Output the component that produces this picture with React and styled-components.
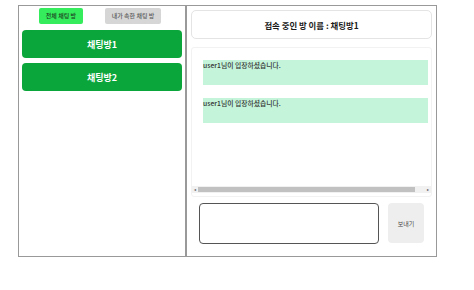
import React from 'react'
import styled, { createGlobalStyle } from 'styled-components'

const GlobalStyle = createGlobalStyle`
  * { box-sizing: border-box; }
  body {
    margin: 0;
    background: #ffffff;
    font-family: "Noto Sans", "Noto Sans CJK KR", sans-serif;
  }
`

const rooms = ['채팅방1', '채팅방2']
const messages = ['user1님이 입장하셨습니다.', 'user1님이 입장하셨습니다.']

const App = () => {
    return (
        <>
            <GlobalStyle />
            <Page>
                <Layout>
                    <RoomPanel>
                        <TabRow>
                            <Tab active $width={44}>전체 채팅 방</Tab>
                            <Tab $width={56}>내가 속한 채팅 방</Tab>
                        </TabRow>
                        <RoomList>
                            {rooms.map((r) => (
                                <RoomButton key={r}>{r}</RoomButton>
                            ))}
                        </RoomList>
                    </RoomPanel>

                    <ChatPanel>
                        <ChatHeader>접속 중인 방 이름 : 채팅방1</ChatHeader>
                        <MessageBox>
                            <MessageList>
                                {messages.map((m, i) => (
                                    <Message key={i}>{m}</Message>
                                ))}
                            </MessageList>
                            <ScrollBar>
                                <Arrow>◂</Arrow>
                                <Thumb />
                                <Arrow>▸</Arrow>
                            </ScrollBar>
                        </MessageBox>
                        <InputRow>
                            <MessageInput />
                            <SendButton>보내기</SendButton>
                        </InputRow>
                    </ChatPanel>
                </Layout>
            </Page>
        </>
    )
}

export default App


const Page = styled.div`
  padding: 5px 0 0 18px;
`

const Layout = styled.div`
  display: flex;
  width: 420px;
  height: 252px;
`

const RoomPanel = styled.section`
  width: 40%;
  border: 1px solid #999999;
  display: flex;
  flex-direction: column;
  padding: 2px 3px;
`

const TabRow = styled.div`
  display: flex;
  justify-content: space-between;
  align-items: center;
  height: 16px;
  padding: 0 21px 0 17px;
`

const Tab = styled.button`
  width: ${({ $width }) => $width}px;
  height: 16px;
  padding: 0;
  border: none;
  border-radius: 2px;
  font-family: "Noto Sans CJK KR", sans-serif;
  font-weight: 500;
  font-size: 6px;
  line-height: 16px;
  white-space: nowrap;
  color: ${({ active }) => (active ? '#1d3b22' : '#5a5a5a')};
  background: ${({ active }) => (active ? '#35ec5c' : '#d6d6d6')};
`

const RoomList = styled.div`
  display: flex;
  flex-direction: column;
  gap: 5px;
  margin-top: 6px;
`

const RoomButton = styled.button`
  height: 28px;
  border: none;
  border-radius: 4px;
  background: #0ba63b;
  color: #ffffff;
  font-family: "Noto Sans CJK KR", sans-serif;
  font-weight: 700;
  font-size: 9px;
`

const ChatPanel = styled.section`
  width: 60%;
  border: 1px solid #999999;
  border-left-width: 2px;
  margin-left: -1px;
  display: flex;
  flex-direction: column;
  padding: 4px 4px 11px;
`

const ChatHeader = styled.div`
  height: 29px;
  border: 1px solid #e4e4e4;
  border-radius: 5px;
  display: flex;
  align-items: center;
  justify-content: center;
  font-family: "Noto Sans CJK KR", sans-serif;
  font-weight: 700;
  font-size: 8.4px;
  color: #1a1a1a;
`

const MessageBox = styled.div`
  margin-top: 8px;
  height: 150px;
  border: 1px solid #f2f2f2;
  border-radius: 3px;
  display: flex;
  flex-direction: column;
`

const MessageList = styled.div`
  flex: 1;
  display: flex;
  flex-direction: column;
  gap: 13px;
  padding: 12px 3px 0 11px;
`

const Message = styled.div`
  height: 25px;
  background: #c4f4da;
  padding-top: 1px;
  font-family: "Noto Sans CJK KR", sans-serif;
  font-weight: 500;
  font-size: 6.8px;
  line-height: 8px;
  color: #333333;
`

const ScrollBar = styled.div`
  display: flex;
  align-items: center;
  height: 7px;
  margin: 0 0 3px 0;
  background: #f1f1f1;
`

const Arrow = styled.span`
  width: 6px;
  font-size: 4px;
  line-height: 7px;
  text-align: center;
  color: #505050;
`

const Thumb = styled.div`
  flex: 1;
  height: 5px;
  margin-right: 10px;
  background: #c1c1c1;
`

const InputRow = styled.div`
  display: flex;
  gap: 9px;
  margin-top: 6px;
  padding: 0 8px;
`

const MessageInput = styled.textarea`
  flex: 1;
  height: 41px;
  border: 1px solid #555555;
  border-radius: 4px;
  resize: none;
  outline: none;
`

const SendButton = styled.button`
  width: 36px;
  height: 40px;
  border: none;
  border-radius: 4px;
  background: #eeeeee;
  font-family: "Noto Sans CJK KR", sans-serif;
  font-size: 6px;
  color: #444444;
`
